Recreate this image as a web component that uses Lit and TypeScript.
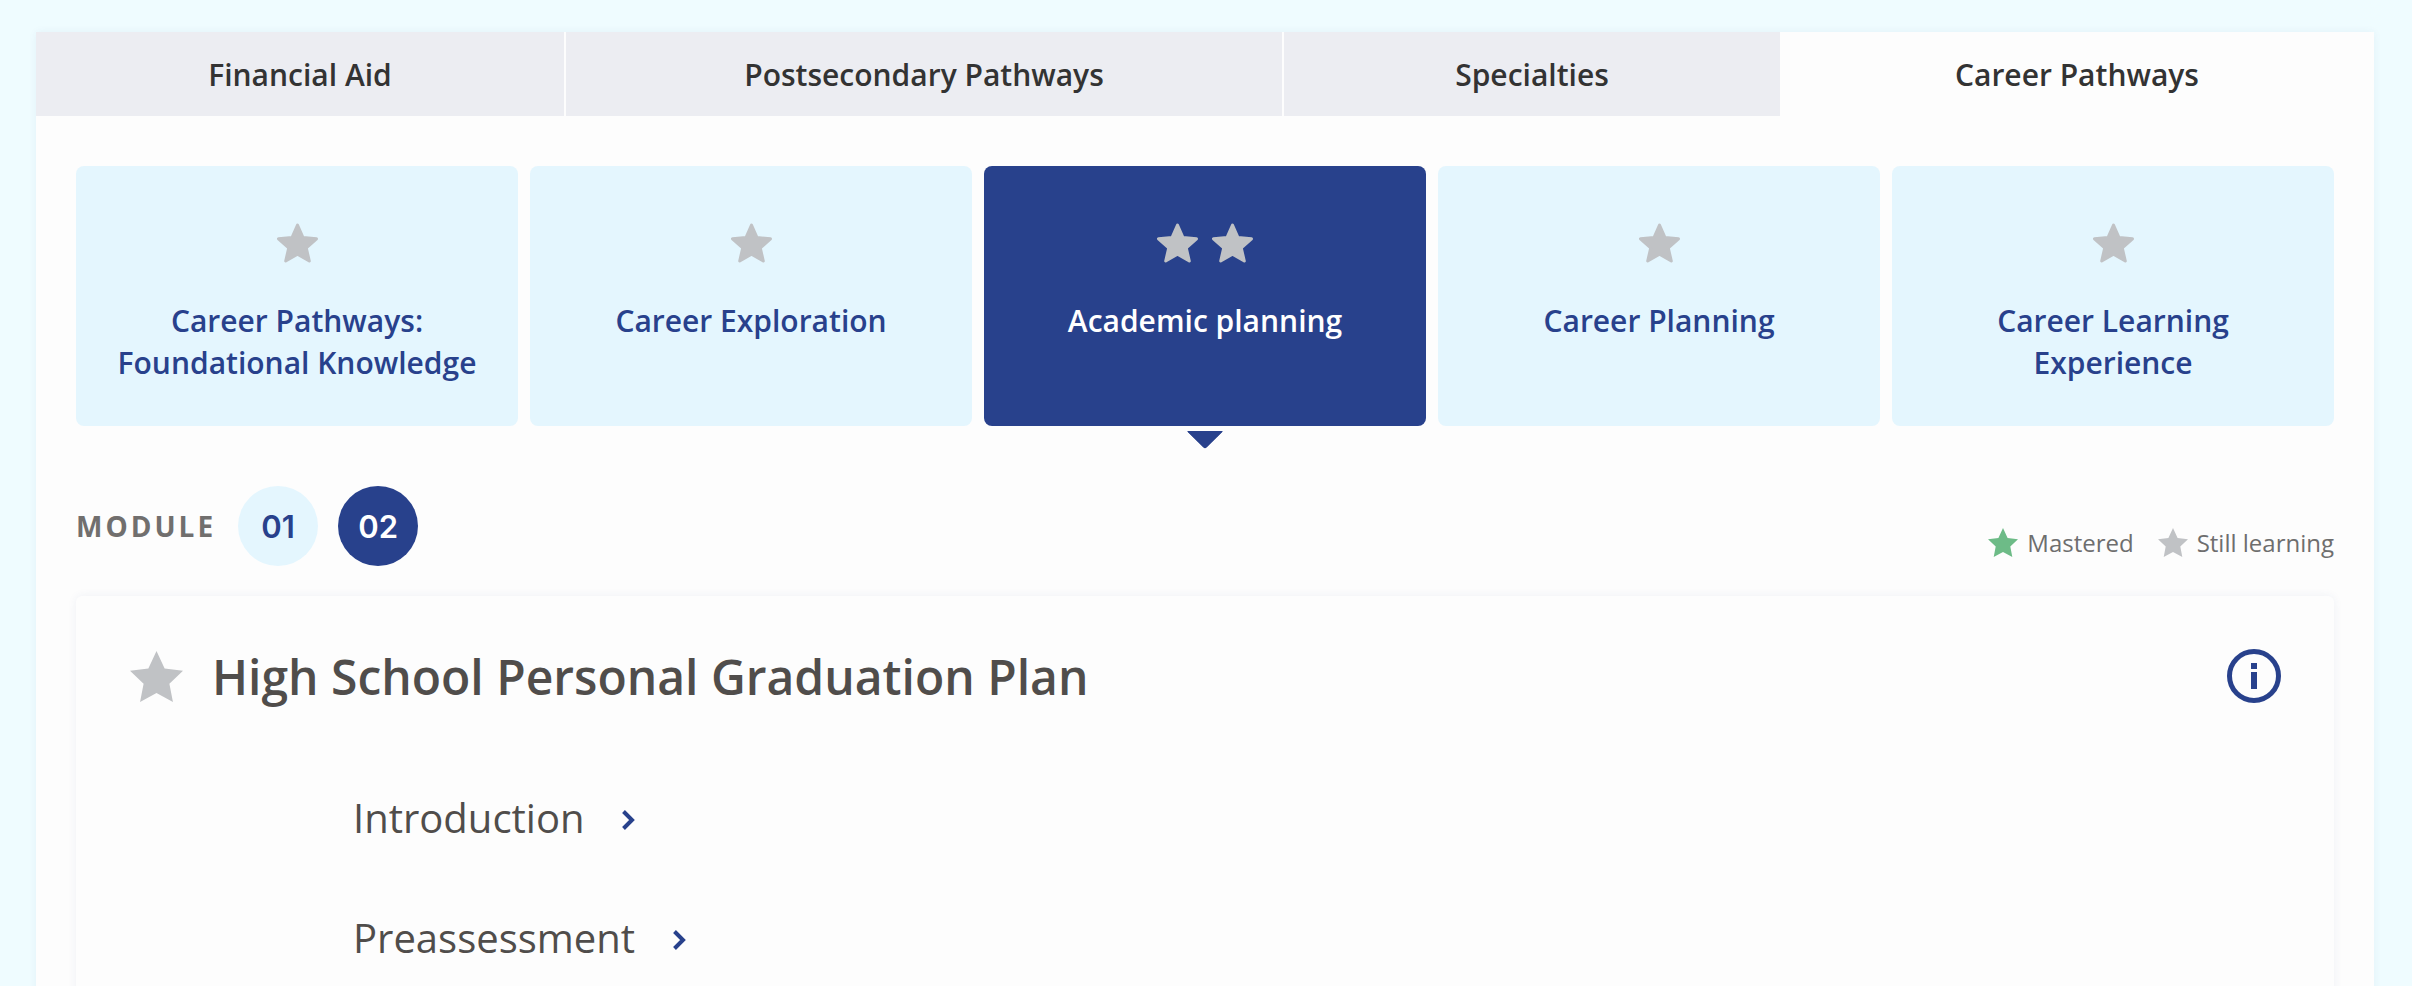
import { LitElement, html, css, svg } from "lit";
import { customElement } from "lit/decorators.js";

const roundStar = svg`<path d="M21.5 2 L27 14.5 L40.5 15.8 L30.3 25 L33.3 38 L21.5 31.2 L9.7 38 L12.7 25 L2.5 15.8 L16 14.5 Z" fill="currentColor" stroke="currentColor" stroke-width="3" stroke-linejoin="round"/>`;
const sharpStar = svg`<path d="M15 0 L19.6 10 L30 11.2 L22.3 18.6 L24.3 29 L15 23.9 L5.7 29 L7.7 18.6 L0 11.2 L10.4 10 Z" fill="currentColor"/>`;

const cards = [
  { lines: ["Career Pathways:", "Foundational Knowledge"], stars: 1 },
  { lines: ["Career Exploration"], stars: 1 },
  { lines: ["Academic planning"], stars: 2, active: true },
  { lines: ["Career Planning"], stars: 1 },
  { lines: ["Career Learning", "Experience"], stars: 1 },
];

@customElement("app-root")
export class AppRoot extends LitElement {
  static styles = css`
    :host {
      display: block;
      height: 986px;
      overflow: hidden;
      background: #effcff;
      padding: 32px 38px 0 36px;
      box-sizing: border-box;
      font-family: "Open Sans", "Liberation Sans", sans-serif;
    }
    .panel {
      background: #fdfdfd;
      box-shadow: 0 0 8px rgba(40, 65, 140, 0.06);
      min-height: 1000px;
    }
    .tabs {
      display: grid;
      grid-template-columns: 530px 718px 496px 594px;
      height: 84px;
    }
    .tab {
      display: flex;
      align-items: center;
      justify-content: center;
      background: #ecedf2;
      color: #333333;
      font-size: 30px;
      font-weight: 600;
    }
    .tab.sep {
      border-right: 2px solid #fdfdfd;
    }
    .tab.on {
      background: #fdfdfd;
    }
    .body {
      padding: 50px 40px 0;
    }
    .cards {
      display: grid;
      grid-template-columns: repeat(5, 442px);
      gap: 12px;
    }
    .card {
      position: relative;
      height: 260px;
      box-sizing: border-box;
      padding-top: 57px;
      border-radius: 8px;
      background: #e4f6fe;
      color: #28418c;
      text-align: center;
      font-size: 30px;
      font-weight: 600;
      line-height: 42px;
    }
    .card.active {
      background: #28418c;
      color: #ffffff;
    }
    .card.active::after {
      content: "";
      position: absolute;
      left: 50%;
      bottom: -18px;
      width: 26px;
      height: 26px;
      border-radius: 3px;
      background: #28418c;
      transform: translate(-50%, 0) scaleX(1.02) rotate(45deg);
      clip-path: polygon(100% 0, 100% 100%, 0 100%);
    }
    .stars {
      display: flex;
      justify-content: center;
      gap: 12px;
      height: 40px;
      margin-bottom: 37px;
      color: #c0c2c5;
    }
    .stars svg {
      width: 43px;
      height: 40px;
      display: block;
    }
    .line {
      display: block;
    }
    .row {
      display: flex;
      align-items: flex-end;
      justify-content: space-between;
      margin-top: 60px;
    }
    .module {
      display: flex;
      align-items: center;
      gap: 20px;
    }
    .module-label {
      color: #716f6e;
      font-size: 28px;
      font-weight: 700;
      letter-spacing: 3px;
      margin-right: 2px;
    }
    .num {
      width: 80px;
      height: 80px;
      border-radius: 50%;
      display: flex;
      align-items: center;
      justify-content: center;
      font-family: Inter, "Open Sans", sans-serif;
      font-size: 31px;
      font-weight: 600;
      background: #e4f6fe;
      color: #28418c;
    }
    .num.on {
      background: #28418c;
      color: #ffffff;
    }
    .legend {
      display: flex;
      align-items: center;
      color: #6e6e6e;
      font-size: 24px;
      padding-bottom: 7px;
    }
    .legend svg {
      width: 30px;
      height: 29px;
      display: block;
      margin-right: 9px;
    }
    .legend .item {
      display: flex;
      align-items: center;
    }
    .legend .item + .item {
      margin-left: 24px;
    }
    .green {
      color: #6dbb87;
    }
    .grey {
      color: #c0c2c5;
    }
    .lesson {
      margin-top: 30px;
      padding: 53px 53px 0 54px;
      min-height: 400px;
      border-radius: 6px;
      background: #fdfdfd;
      box-shadow: 0 0 10px rgba(40, 65, 140, 0.07);
    }
    .head {
      display: flex;
      align-items: center;
      height: 54px;
    }
    .head .star {
      width: 53px;
      height: 53px;
      display: block;
      color: #c0c2c5;
    }
    .head h2 {
      flex: 1;
      margin: 0 0 0 29px;
      color: #504d4b;
      font-size: 48px;
      font-weight: 600;
    }
    .info {
      width: 54px;
      height: 54px;
      display: block;
    }
    .links {
      margin-top: 54px;
      padding-left: 223px;
      display: flex;
      flex-direction: column;
    }
    .link {
      display: flex;
      align-items: center;
      height: 120px;
      color: #504d4b;
      font-size: 40px;
    }
    .link svg {
      width: 14px;
      height: 22px;
      margin-left: 37px;
      margin-top: 6px;
      display: block;
    }
  `;

  render() {
    return html`
      <div class="panel">
        <div class="tabs">
          <div class="tab sep">Financial Aid</div>
          <div class="tab sep">Postsecondary Pathways</div>
          <div class="tab">Specialties</div>
          <div class="tab on">Career Pathways</div>
        </div>
        <div class="body">
          <div class="cards">
            ${cards.map(
              (c) => html`
                <div class="card ${c.active ? "active" : ""}">
                  <div class="stars">
                    ${Array.from({ length: c.stars }).map(
                      () => html`<svg viewBox="0 0 43 40">${roundStar}</svg>`
                    )}
                  </div>
                  ${c.lines.map((l) => html`<span class="line">${l}</span>`)}
                </div>
              `
            )}
          </div>
          <div class="row">
            <div class="module">
              <span class="module-label">MODULE</span>
              <span class="num">01</span>
              <span class="num on">02</span>
            </div>
            <div class="legend">
              <span class="item"><svg class="green" viewBox="0 0 30 29">${sharpStar}</svg>Mastered</span>
              <span class="item"><svg class="grey" viewBox="0 0 30 29">${sharpStar}</svg>Still learning</span>
            </div>
          </div>
          <div class="lesson">
            <div class="head">
              <svg class="star" viewBox="0 0 30 29">${sharpStar}</svg>
              <h2>High School Personal Graduation Plan</h2>
              <svg class="info" viewBox="0 0 54 54">
                <circle cx="27" cy="27" r="24.5" fill="none" stroke="#28418c" stroke-width="5" />
                <rect x="24" y="14" width="6" height="6" fill="#28418c" />
                <rect x="24" y="23" width="6" height="17" fill="#28418c" />
              </svg>
            </div>
            <div class="links">
              <div class="link">Introduction
                <svg viewBox="0 0 14 22"><path d="M2.5 2.5 L11 11 L2.5 19.5" fill="none" stroke="#28418c" stroke-width="4" /></svg>
              </div>
              <div class="link">Preassessment
                <svg viewBox="0 0 14 22"><path d="M2.5 2.5 L11 11 L2.5 19.5" fill="none" stroke="#28418c" stroke-width="4" /></svg>
              </div>
            </div>
          </div>
        </div>
      </div>
    `;
  }
}
